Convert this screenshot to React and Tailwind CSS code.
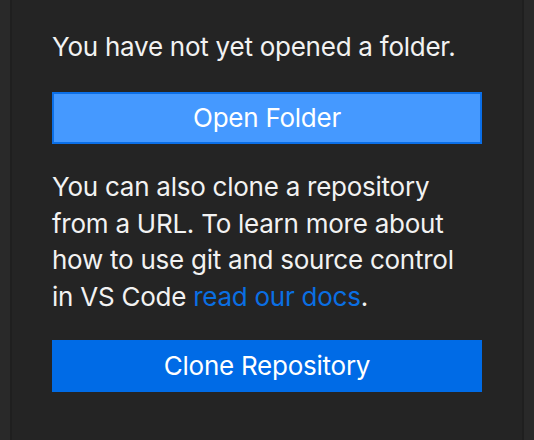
import React from "react";

const font = { fontFamily: "Inter, 'Noto Sans', sans-serif" };

export default function App() {
  return (
    <div className="flex h-[440px] w-[534px] overflow-hidden bg-[#292929]" style={font}>
      <div className="ml-[10px] w-[514px] border-x-2 border-[#1f1f1f] bg-[#242424] px-[40px] pt-[29px] text-[26px] leading-[36.4px] tracking-[-0.25px] text-[#f2f2f2]">
        <p>You have not yet opened a folder.</p>
        <button className="mt-[27px] flex h-[52px] w-full items-center justify-center border-2 border-[#0b6fe8] bg-[#4599ff] text-[26px] tracking-[-0.25px] text-white">
          Open Folder
        </button>
        <p className="mt-[25px]">
          You can also clone a repository
          <br />
          from a URL. To learn more about
          <br />
          how to use git and source control
          <br />
          in VS Code{" "}
          <a href="#" className="text-[#0a6fe3]">
            read our docs
          </a>
          .
        </p>
        <button className="mt-[25px] flex h-[52px] w-full items-center justify-center bg-[#006be6] text-[26px] tracking-[-0.25px] text-white">
          Clone Repository
        </button>
      </div>
    </div>
  );
}
